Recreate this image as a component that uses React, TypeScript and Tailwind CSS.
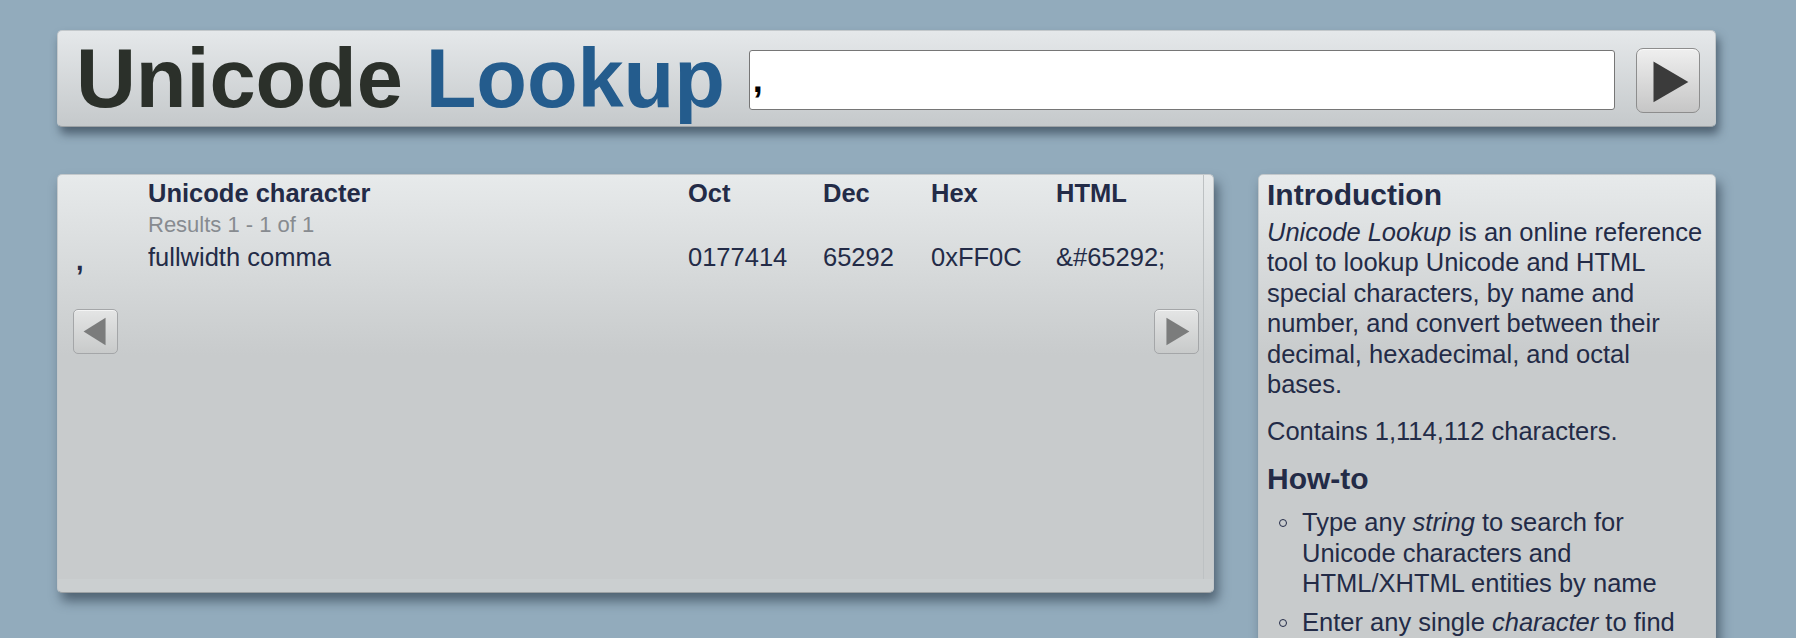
function Triangle({ dir, color, size, points }: { dir: string; color: string; size: string; points: string }) {
  return (
    <svg viewBox={size} className="w-full h-full" aria-label={dir}>
      <polygon points={points} fill={color} />
    </svg>
  )
}

function NavButton({ dir }: { dir: 'prev' | 'next' }) {
  return (
    <button className="w-[45px] h-[45px] rounded-[5px] border border-[#a4a6a8] bg-[linear-gradient(to_bottom,#e4e5e5,#c8caca)] shadow-[inset_0_1px_0_rgba(255,255,255,0.6)]">
      {dir === 'prev' ? (
        <Triangle dir="prev" color="#7b7c7c" size="0 0 45 45" points="33,8 33,37 10,22.5" />
      ) : (
        <Triangle dir="next" color="#7b7c7c" size="0 0 45 45" points="12,8 12,37 36,22.5" />
      )}
    </button>
  )
}

const columns = ['Oct', 'Dec', 'Hex', 'HTML']

function ResultsPanel() {
  return (
    <div className="w-[1157px] h-[419px] shrink-0 flex flex-col rounded-[5px] border border-[#c3c8cb] border-b-[#9da2a5] bg-[linear-gradient(to_bottom,#e7eaeb,#c8cbcc_180px)] shadow-[4px_8px_12px_rgba(35,50,65,0.6)]">
      <div className="flex-1 mr-[9px] border-r border-[#bdc1c3] pt-[2px] pl-[15px]">
        <div className="grid grid-cols-[75px_540px_135px_108px_125px_120px] text-[25.5px] leading-[32px] text-[#232b47]">
          <div />
          <div className="font-bold">Unicode character</div>
          {columns.map((c) => (
            <div key={c} className="font-bold">{c}</div>
          ))}
          <div />
          <div className="col-span-5 text-[22px] text-[#878b90]">Results 1 - 1 of 1</div>
          <div className="pl-[3px] h-[32px] font-bold text-[27px] leading-[32px] translate-y-[4px]">,</div>
          <div>fullwidth comma</div>
          <div>0177414</div>
          <div>65292</div>
          <div>0xFF0C</div>
          <div>&amp;#65292;</div>
        </div>
        <div className="flex justify-between mt-[36px] pr-[4px]">
          <NavButton dir="prev" />
          <NavButton dir="next" />
        </div>
      </div>
      <div className="h-[13px] bg-[#cbcfd0] rounded-b-[5px]" />
    </div>
  )
}

function Bullet({ children }: { children: React.ReactNode }) {
  return (
    <li className="flex">
      <span className="w-[29px] shrink-0 pl-[12px] pt-[12px]">
        <span className="block w-[8px] h-[8px] rounded-full border border-[#232b47]" />
      </span>
      <span className="pl-[6px]">{children}</span>
    </li>
  )
}

function Sidebar() {
  return (
    <div className="w-[458px] shrink-0 rounded-[5px] border border-[#c3c8cb] bg-[linear-gradient(to_bottom,#e7eaeb,#c8cbcc_180px)] shadow-[4px_8px_12px_rgba(35,50,65,0.6)] pt-[3px] pl-[8px] pr-[8px] pb-8 text-[#232b47]">
      <h2 className="text-[30px] leading-[34px] font-bold mb-[5px]">Introduction</h2>
      <p className="text-[25.5px] leading-[30.4px] pr-[2px]">
        <i>Unicode Lookup</i> is an online reference tool to lookup Unicode and HTML special characters, by name and
        number, and convert between their decimal, hexadecimal, and octal bases.
      </p>
      <p className="text-[25.5px] leading-[30.4px] mt-[17px]">Contains 1,114,112 characters.</p>
      <h2 className="text-[30px] leading-[34px] font-bold mt-[15px]">How-to</h2>
      <ul className="mt-[11px] text-[25.5px] leading-[30.8px] pr-[2px] space-y-[8px]">
        <Bullet>
          Type any <i>string</i> to search for Unicode characters and HTML/XHTML entities by name
        </Bullet>
        <Bullet>
          Enter any single <i>character</i> to find its Unicode and HTML entity details
        </Bullet>
        <Bullet>
          Enter a number in decimal, hexadecimal, or octal to look up the character
        </Bullet>
      </ul>
    </div>
  )
}

export default function App() {
  return (
    <div className="min-h-screen bg-[#92abbc] pt-[30px] font-['Liberation_Sans',Arial,sans-serif] overflow-hidden">
      <div className="ml-[57px] w-[1659px]">
        <div className="h-[97px] flex items-center pl-[18px] pr-[15px] rounded-[5px] border border-[#c3c8cb] border-b-[#9da2a5] bg-[linear-gradient(to_bottom,#e5e8ea,#c5c9cb)] shadow-[3px_7px_10px_rgba(35,50,65,0.6)]">
          <h1 className="text-[83px] leading-[83px] font-bold tracking-[-0.1px] -mt-[1px] whitespace-nowrap">
            <span className="text-[#2b302a]">Unicode</span> <span className="text-[#245c8d]">Lookup</span>
          </h1>
          <div className="flex-1 ml-[24px] mt-[3px] h-[60px] bg-white border border-[#767676] rounded-[3px] flex items-center pl-[3px] text-[36px] font-bold text-black">
            ,
          </div>
          <button className="ml-[21px] mt-[3px] w-[64px] h-[65px] rounded-[7px] border border-[#8d8d8d] bg-[linear-gradient(to_bottom,#efefef,#c6c6c6)] shadow-[inset_0_1px_0_rgba(255,255,255,0.7)]">
            <Triangle dir="go" color="#3b3b3b" size="0 0 64 65" points="17,13 17,55 53,34" />
          </button>
        </div>
        <div className="mt-[47px] flex items-start gap-[44px]">
          <ResultsPanel />
          <Sidebar />
        </div>
      </div>
    </div>
  )
}
